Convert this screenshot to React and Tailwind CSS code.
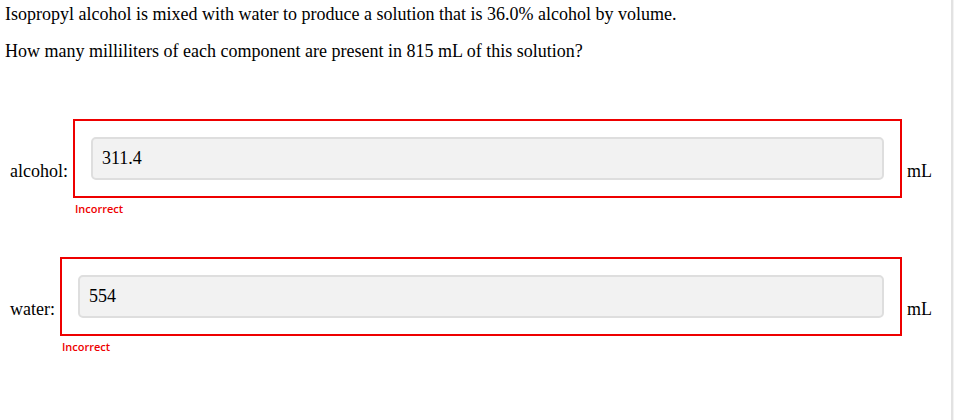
import React from "react";

const Field = ({ label, value }) => (
  <div className="flex items-start ml-[10px] w-[922px]">
    <span className="mt-[42px] mr-[5px] whitespace-nowrap">{label}</span>
    <div className="flex-1 flex flex-col">
      <div className="border-2 border-[#e00] p-4">
        <input
          readOnly
          value={value}
          className="w-full h-[43px] bg-[#f2f2f2] border-2 border-[#dedede] rounded-[5px] px-[9px] text-[18px] text-black outline-none font-['Liberation_Serif',serif]"
        />
      </div>
      <div className="pl-[2px] mt-[3px] text-[11px] leading-[15px] font-semibold text-[#e00] font-['Open_Sans',sans-serif]">
        Incorrect
      </div>
    </div>
    <span className="mt-[42px] ml-[5px] whitespace-nowrap">mL</span>
  </div>
);

export default function App() {
  return (
    <div className="flex w-[954px] h-[420px] bg-white text-black font-['Liberation_Serif',serif] text-[18px] leading-[21px]">
      <div className="flex-1 pt-[4px]">
        <p className="pl-[5px] mb-[16px]">
          Isopropyl alcohol is mixed with water to produce a solution that is 36.0% alcohol by volume.
        </p>
        <p className="pl-[5px]">
          How many milliliters of each component are present in 815 mL of this solution?
        </p>
        <div className="mt-[57px]">
          <Field label="alcohol:" value="311.4" />
        </div>
        <div className="mt-[41px]">
          <Field label="water:" value="554" />
        </div>
      </div>
      <div className="w-[3px] h-full border-l-2 border-[#e2e2e2] bg-[#f3f3f3]" />
    </div>
  );
}
